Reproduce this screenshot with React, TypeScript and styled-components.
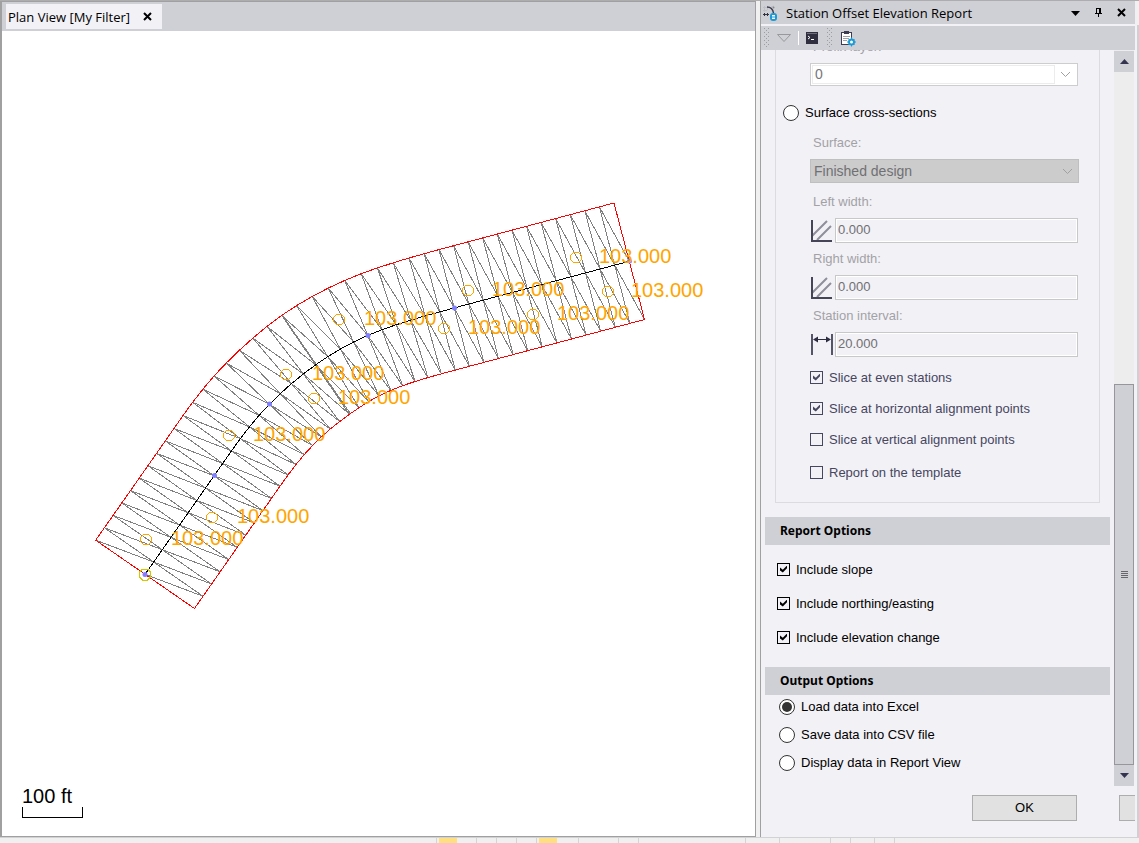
import React from "react";
import styled, { createGlobalStyle, css } from "styled-components";

const sans = `"Liberation Sans", Arial, sans-serif`;
const ui = `"Open Sans", "Noto Sans", sans-serif`;
const c = {
  bar: "#cfd0d5",
  pane: "#f2f1f6",
  edge: "#a0a0a0",
  line: "#cdcdcd",
  mute: "#a2a2a6",
  ink: "#343450",
};

const GlobalStyle = createGlobalStyle`
  * { box-sizing: border-box; }
  body { margin: 0; background: #f0f0f0; overflow: hidden; font: 13px/16px ${sans}; color: #000; }
  button, input, select { font: inherit; color: inherit; margin: 0; padding: 0; border-radius: 0; }
  button { background: none; border: 0; }
`;

const Shell = styled.div`
  height: 100vh;
  display: flex;
  flex-direction: column;
  border-top: 1px solid #adadb0;
`;
const Main = styled.main`
  flex: 1;
  min-height: 0;
  display: flex;
`;

/* ---- plan view ---- */
const PlanPane = styled.section`
  flex: 1;
  min-width: 0;
  display: flex;
  flex-direction: column;
  background: #fff;
  border: 1px solid ${c.edge};
  border-left-width: 2px;
`;
const TabBar = styled.div`
  height: 29px;
  display: flex;
  padding: 2px 4px;
  background: ${c.bar};
`;
const Tab = styled.div`
  display: flex;
  align-items: center;
  justify-content: space-between;
  width: 156px;
  padding: 0 10px 0 2px;
  background: ${c.pane};
  font: 13px/20px ${ui};
  white-space: nowrap;
`;
const Canvas = styled.div`
  position: relative;
  flex: 1;
  min-height: 0;
  overflow: hidden;
`;
const Drawing = styled.svg`
  display: block;
`;
const ScaleBar = styled.div`
  position: absolute;
  left: 20px;
  bottom: 18px;
  width: 61px;
  height: 34px;
  font: 20px/24px ${sans};
  white-space: nowrap;
  &::after {
    content: "";
    position: absolute;
    left: 0;
    right: 0;
    bottom: 0;
    height: 10px;
    border: 1px solid #000;
    border-top: 0;
  }
`;

/* ---- report panel ---- */
const Panel = styled.aside`
  flex: none;
  width: 375px;
  margin-left: 4px;
  display: flex;
  flex-direction: column;
  background: ${c.pane};
  border-left: 1px solid ${c.edge};
`;
const TitleBar = styled.header`
  flex: none;
  height: 23px;
  margin-bottom: 2px;
  display: flex;
  align-items: center;
  gap: 8px;
  padding: 0 9px 0 1px;
  background: ${c.bar};
  font: 13px/20px ${ui};
`;
const Title = styled.h1`
  flex: 1;
  margin: 0;
  font: inherit;
`;
const TitleButtons = styled.div`
  display: flex;
  align-items: center;
  gap: 15px;
`;
const IconButton = styled.button`
  display: grid;
  place-items: center;
`;
const Toolbar = styled.div`
  height: 24px;
  flex: none;
  display: flex;
  align-items: center;
  padding-left: 3px;
  background: ${c.bar};
`;
const Divider = styled.span`
  width: 1px;
  height: 14px;
  margin-right: 6px;
  background: #fff;
`;
const ConsoleButton = styled(IconButton)`
  margin-right: 8px;
`;
const Scroller = styled.div`
  flex: 1;
  min-height: 0;
  display: flex;
  overflow: hidden;
`;
const Content = styled.form`
  flex: 1;
  min-width: 0;
  padding: 0 4px;
`;
const Group = styled.div`
  height: 464px;
  margin: 0 10px 14px;
  padding: 0 20px 0 34px;
  border: 1px solid #dbdbe0;
  border-top: 0;
`;
const Field = styled.div<{ $after?: number }>`
  display: flex;
  flex-direction: column;
  gap: 8px;
  margin-bottom: ${(p) => p.$after ?? 8}px;
`;
const ClippedField = styled(Field)`
  margin-top: -11px;
`;
const FieldLabel = styled.label`
  height: 16px;
  padding-left: 3px;
  color: ${c.mute};
`;
const Combo = styled.div`
  height: 23px;
  display: flex;
  align-items: stretch;
  padding: 1px;
  margin-right: 1px;
  background: #fff;
  border: 1px solid ${c.line};
`;
const ComboInput = styled.input`
  flex: 1;
  min-width: 0;
  padding: 0 0 2px 2px;
  border: 1px solid #ececec;
  background: #fff;
  font-size: 14px;
  color: #77777a;
`;
const ComboButton = styled(IconButton)`
  width: 21px;
`;
const SelectBox = styled.div`
  height: 24px;
  display: grid;
  align-items: center;
  background: #cccccc;
  border: 1px solid #bfbfbf;
  & > * { grid-area: 1 / 1; }
  & > svg { justify-self: end; margin-right: 5px; }
`;
const Select = styled.select`
  appearance: none;
  width: 100%;
  height: 22px;
  padding-left: 3px;
  border: 0;
  background: transparent;
  font-size: 14px;
  color: #707073;
  opacity: 1;
`;
const Measure = styled.div`
  display: flex;
  align-items: center;
  gap: 2px;
  margin-right: 1px;
`;
const MeasureInput = styled.input`
  flex: 1;
  min-width: 0;
  height: 25px;
  padding: 0 2px 3px;
  border: 1px solid #c8c8c8;
  box-shadow: inset 0 0 0 1px #fff;
  background: ${c.pane};
  color: #6f6f73;
`;
const Choices = styled.div<{ $gap: number; $pad?: string }>`
  display: flex;
  flex-direction: column;
  align-items: flex-start;
  gap: ${(p) => p.$gap}px;
  padding: ${(p) => p.$pad ?? "0"};
`;
const Choice = styled.label<{ $dim?: boolean }>`
  display: flex;
  align-items: center;
  gap: 6px;
  height: 20px;
  color: ${(p) => (p.$dim ? "#46465f" : "#000")};
`;
const control = css`
  appearance: none;
  flex: none;
  display: grid;
  place-items: center;
`;
const Check = styled.input.attrs({ type: "checkbox" })`
  ${control}
  width: 13px;
  height: 13px;
  margin-bottom: 2px;
  border: 1px solid currentColor;
  &:checked::after {
    content: "";
    width: 7px;
    height: 7px;
    background: currentColor;
    clip-path: polygon(0 30%, 40% 60%, 100% 0, 100% 40%, 40% 100%, 0 70%);
  }
`;
const Radio = styled.input.attrs({ type: "radio" })`
  ${control}
  width: 16px;
  height: 16px;
  border: 1px solid #333;
  border-radius: 50%;
  background: #fff;
  &:checked::after {
    content: "";
    width: 10px;
    height: 10px;
    border-radius: 50%;
    background: #333;
  }
`;
const ModeChoice = styled(Choice)`
  height: 20px;
  margin: 17px 0 12px -27px;
`;
const SectionTitle = styled.h2`
  height: 28px;
  margin: 0;
  padding-left: 15px;
  background: ${c.bar};
  font: bold 12px/28px "Noto Sans", "Open Sans", sans-serif;
`;
const Scrollbar = styled.div`
  flex: none;
  width: 20px;
  margin-right: 1px;
  display: flex;
  flex-direction: column;
  padding-top: 1px;
  background: #ededed;
`;
const ScrollButton = styled(IconButton)`
  height: 21px;
  background: ${c.bar};
`;
const Track = styled.div`
  flex: 1;
  display: flex;
  flex-direction: column;
  justify-content: flex-end;
`;
const Thumb = styled.div`
  height: 55%;
  display: grid;
  place-items: center;
  background: ${c.bar};
  border: 1px solid #97979b;
`;
const Footer = styled.footer`
  flex: none;
  height: 51px;
  display: flex;
  justify-content: flex-end;
  gap: 42px;
  padding-top: 9px;
`;
const PushButton = styled.button<{ $cut?: boolean }>`
  width: ${(p) => (p.$cut ? 16 : 105)}px;
  height: 26px;
  background: #e1e1e1;
  border: 1px solid #adadad;
  border-right-width: ${(p) => (p.$cut ? 0 : 1)}px;
`;
const RightRail = styled.div`
  flex: none;
  width: 4px;
  margin-top: 24px;
  background: ${c.bar};
  border-left: 2px solid ${c.pane};
`;

/* ---- status strip ---- */
const Status = styled.div`
  height: 6px;
  flex: none;
  display: flex;
  border-top: 1px solid #d2d2d4;
  background: #f0f0f0;
`;
const StatusCell = styled.span<{ $w: number; $on?: boolean }>`
  flex: none;
  width: ${(p) => p.$w}px;
  padding-left: 2px;
  border-right: 1px solid #d4d4d4;
  &::before {
    content: "";
    display: ${(p) => (p.$on ? "block" : "none")};
    width: 18px;
    height: 5px;
    background: #ffdf7f;
  }
`;

type P = [number, number];
/* Evenly spaced stations on a tangent, both ends included. */
const tangent = (a: P, b: P, n: number): P[] =>
  Array.from({ length: n + 1 }, (_, i) => [
    a[0] + ((b[0] - a[0]) * i) / n,
    a[1] + ((b[1] - a[1]) * i) / n,
  ]);
const outer: P[] = [
  ...tangent([95.7, 540.2], [174, 428.5], 9),
  [183, 415.5], [192.7, 402.3], [202.9, 389.2], [214, 376], [226.3, 363], [239.3, 350.3],
  [252.8, 338.2], [267, 326.4], [281.7, 315.4], [296.5, 305.6], [312.2, 296.5],
  [328.2, 288.1], [344.7, 280.5], [361.2, 273.7], [377.5, 267.9], [393.3, 262.8],
  [409, 258], [424.2, 253.7],
  ...tangent([439, 249.6], [614, 203], 12),
];
const inner: P[] = [
  ...tangent([194.5, 608.5], [280, 486.2], 10),
  [288, 475], [296, 464.5], [304.2, 454.7], [312.6, 445.5], [321.3, 437], [330.2, 429],
  [339.7, 421.5], [349.5, 414.3], [359, 407.7], [368.5, 401.7], [379, 395.9],
  [390.8, 390.4], [402.6, 385.7], [415, 381.5], [427.9, 377.6], [441.3, 373.8],
  [455.3, 370.1],
  ...tangent([469.3, 366.3], [644.5, 319.5], 12),
];
const center: P[] = outer.map(([x, y], i) => [(x + inner[i][0]) / 2, (y + inner[i][1]) / 2]);
const pts = (a: P[]) => a.map((p) => p.join(",")).join(" ");
const seg = (a: P, b: P) => `M${a.join(" ")}L${b.join(" ")}`;
const mesh = center
  .map((m, i) =>
    i === 0
      ? ""
      : (i < center.length - 1 ? seg(outer[i], inner[i]) : "") +
        seg(outer[i - 1], m) +
        seg(center[i - 1], inner[i])
  )
  .join("");
const nodes: P[] = [[145, 574.5], [214.5, 475.5], [269.5, 404], [368, 335.5], [454.5, 308], [629.5, 261]];
const shots: { at: P; label: P }[] = [
  { at: [576, 257.5], label: [599, 263] },
  { at: [608, 291.5], label: [631, 297] },
  { at: [468, 290.5], label: [492, 296] },
  { at: [533, 314.5], label: [557, 320] },
  { at: [444, 328.5], label: [468, 334] },
  { at: [339, 319.5], label: [364, 325] },
  { at: [286, 374.5], label: [312, 380] },
  { at: [314, 398.5], label: [338, 404] },
  { at: [229, 435.5], label: [253, 441] },
  { at: [212, 517.5], label: [237, 523] },
  { at: [146, 539.5], label: [171, 545] },
];

const Plan = () => (
  <Drawing width="753" height="640" viewBox="2 31 753 640" fill="none">
    <g shapeRendering="crispEdges">
      <path d={mesh} stroke="#808080" />
      <path d="M283 316L347 411M282 315L350 413" stroke="#808080" />
      <polygon points={pts([...outer, ...[...inner].reverse()])} stroke="#f00" />
      <polyline points={pts(center)} stroke="#000" />
      <path d="M142.500 569h5l3 3v5l-3 3h-5l-3-3v-5z" stroke="#d2c800" />
      {shots.map(({ at: [x, y] }) => (
        <circle key={x} cx={x} cy={y} r="5.500" stroke="#ffa500" />
      ))}
    </g>
    {nodes.map(([x, y]) => (
      <circle key={x} cx={x} cy={y} r="2.500" fill="#8080ff" />
    ))}
    <g fill="#ffa500" fontFamily={sans} fontSize="20">
      {shots.map(({ label: [x, y] }) => (
        <text key={x} x={x} y={y}>103.000</text>
      ))}
    </g>
  </Drawing>
);

const Cross = () => (
  <svg width="9" height="9" viewBox="0 0 9 9" stroke="#000" strokeWidth="2">
    <path d="M1 1l7 7M8 1L1 8" />
  </svg>
);
const Chevron = () => (
  <svg width="11" height="7" viewBox="0 0 11 7" fill="none" stroke="#a0a0a0">
    <path d="M1 1l4.500 4.500L10 1" />
  </svg>
);
const Grip = () => (
  <svg width="6" height="20" viewBox="0 0 6 20" fill="#9c9ca2" shapeRendering="crispEdges">
    {[0, 4, 8, 12, 16].map((y) => (
      <path key={y} d={`M0 ${y}h1v1h-1zM4 ${y}h1v1h-1zM2 ${y + 2}h1v1h-1z`} />
    ))}
  </svg>
);
const ReportIcon = () => (
  <svg width="16" height="16" viewBox="0 0 16 16" fill="none">
    <path d="M1 2.500h5M1 5.500h4M2.500 1v6M5.500 1v4M9 2l3-1" stroke="#c0c0c8" />
    <path d="M5 2c4 0 6 3 6.500 6" stroke="#3b3b4c" strokeWidth="1.500" />
    <path d="M1 9.500h6M2.500 8v3M5.500 8v3" stroke="#33333f" />
    <circle cx="11.500" cy="2.500" r="1" fill="#88888f" />
    <rect x="8" y="8" width="7" height="8" rx="3" fill="#1b9ad6" />
    <rect x="10" y="10" width="3" height="4" fill="#fff" />
    <path d="M10 12h3" stroke="#1b9ad6" />
  </svg>
);
const WidthIcon = () => (
  <svg width="23" height="23" viewBox="0 0 23 23" fill="none">
    <path d="M2 17L17 2M7 21L21 7" stroke="#8e8e9c" strokeWidth="2" />
    <path d="M2 1v21h20" stroke="#45455a" strokeWidth="2" />
  </svg>
);
const IntervalIcon = () => (
  <svg width="23" height="23" viewBox="0 0 23 23">
    <path d="M2 1v21M22 1v21" stroke="#55556a" strokeWidth="2" />
    <path d="M4 6.500h16" stroke="#2c2c40" strokeWidth="1" />
    <path d="M3 6.500l5-3v6zM21 6.500l-5-3v6z" fill="#2c2c40" />
  </svg>
);

const MeasureField = ({ id, label, value, icon, after }: {
  id: string; label: string; value: string; icon: React.ReactNode; after?: number;
}) => (
  <Field $after={after}>
    <FieldLabel htmlFor={id}>{label}</FieldLabel>
    <Measure>
      {icon}
      <MeasureInput id={id} defaultValue={value} disabled />
    </Measure>
  </Field>
);

const Tick = ({ label, on, dim }: { label: string; on?: boolean; dim?: boolean }) => (
  <Choice $dim={dim}>
    <Check defaultChecked={on} disabled={dim} />
    {label}
  </Choice>
);

const cells: [number, boolean?][] = [
  [437], [40, true], [20], [20], [20], [42, true], [40], [20], [107], [34], [51], [20], [24], [20],
];

export default function App() {
  return (
    <Shell>
      <GlobalStyle />
      <Main>
        <PlanPane>
          <TabBar>
            <Tab>
              Plan View [My Filter]
              <IconButton aria-label="Close tab"><Cross /></IconButton>
            </Tab>
          </TabBar>
          <Canvas>
            <Plan />
            <ScaleBar>100 ft</ScaleBar>
          </Canvas>
        </PlanPane>
        <Panel>
          <TitleBar>
            <ReportIcon />
            <Title>Station Offset Elevation Report</Title>
            <TitleButtons>
              <IconButton aria-label="Menu">
                <svg width="9" height="9" viewBox="0 0 9 9"><path d="M0 3h9L4.500 8z" /></svg>
              </IconButton>
              <IconButton aria-label="Pin">
                <svg width="7" height="9" viewBox="0 0 7 9" shapeRendering="crispEdges">
                  <path d="M1 0h5v5h1v1H4v3H3V6H0V5h1zM2 1v4h2V1z" fillRule="evenodd" />
                </svg>
              </IconButton>
              <IconButton aria-label="Close"><Cross /></IconButton>
            </TitleButtons>
          </TitleBar>
          <Toolbar>
            <Grip />
            <IconButton aria-label="Filter">
              <svg width="28" height="16" viewBox="0 0 28 16" fill="none" stroke="#98989c">
                <path d="M7.500 4.500h13l-6.500 7z" />
              </svg>
            </IconButton>
            <Divider />
            <ConsoleButton aria-label="Console">
              <svg width="14" height="14" viewBox="0 0 14 14" fill="none">
                <rect x="1" y="1" width="12" height="12" fill="#2f2f40" />
                <path d="M2 2.500h10" stroke="#6d6d7a" />
                <path d="M3 5l2 1.500L3 8M6 8.500h3" stroke="#fff" />
              </svg>
            </ConsoleButton>
            <Grip />
            <IconButton aria-label="Report settings">
              <svg width="28" height="18" viewBox="0 0 28 18" fill="none">
                <rect x="8.500" y="3.500" width="10" height="12" fill="#fff" stroke="#3c3c52" />
                <rect x="11" y="2" width="5" height="3" fill="#3c3c52" />
                <path d="M10 7.500h7M10 9.500h6M10 11.500h4" stroke="#a0a0ac" />
                <circle cx="18.500" cy="13" r="2.500" fill="#fff" stroke="#1b9ad6" strokeWidth="2" />
                <path d="M18.500 8.500v1.500M18.500 16v1.500M14 13h1.500M21.500 13H23M15.500 10l1 1M21.500 10l-1 1M15.500 16l1-1M21.500 16l-1-1" stroke="#1b9ad6" />
              </svg>
            </IconButton>
          </Toolbar>
          <Scroller>
            <Content>
              <Group>
                <ClippedField>
                  <FieldLabel htmlFor="prefix">Prefix layer:</FieldLabel>
                  <Combo>
                    <ComboInput id="prefix" defaultValue="0" disabled />
                    <ComboButton type="button" aria-label="Open list"><Chevron /></ComboButton>
                  </Combo>
                </ClippedField>
                <ModeChoice>
                  <Radio name="mode" />
                  Surface cross-sections
                </ModeChoice>
                <Field $after={11}>
                  <FieldLabel htmlFor="surface">Surface:</FieldLabel>
                  <SelectBox>
                    <Select id="surface" disabled><option>Finished design</option></Select>
                    <Chevron />
                  </SelectBox>
                </Field>
                <MeasureField id="left" label="Left width:" value="0.000" icon={<WidthIcon />} />
                <MeasureField id="right" label="Right width:" value="0.000" icon={<WidthIcon />} />
                <MeasureField id="interval" label="Station interval:" value="20.000" icon={<IntervalIcon />} after={11} />
                <Choices $gap={11}>
                  <Tick dim on label="Slice at even stations" />
                  <Tick dim on label="Slice at horizontal alignment points" />
                  <Tick dim label="Slice at vertical alignment points" />
                </Choices>
                <Choices $gap={11} $pad="13px 0 0">
                  <Tick dim label="Report on the template" />
                </Choices>
              </Group>
              <SectionTitle>Report Options</SectionTitle>
              <Choices $gap={14} $pad="15px 12px 19px">
                <Tick on label="Include slope" />
                <Tick on label="Include northing/easting" />
                <Tick on label="Include elevation change" />
              </Choices>
              <SectionTitle>Output Options</SectionTitle>
              <Choices $gap={8} $pad="2px 14px">
                <Choice><Radio name="out" defaultChecked />Load data into Excel</Choice>
                <Choice><Radio name="out" />Save data into CSV file</Choice>
                <Choice><Radio name="out" />Display data in Report View</Choice>
              </Choices>
            </Content>
            <Scrollbar>
              <ScrollButton aria-label="Scroll up">
                <svg width="9" height="5" viewBox="0 0 9 5"><path d="M0 5h9L4.500 0z" fill={c.ink} /></svg>
              </ScrollButton>
              <Track>
                <Thumb>
                  <svg width="7" height="9" viewBox="0 0 7 9" stroke="#66666c" shapeRendering="crispEdges">
                    <path d="M0 1h7M0 3h7M0 5h7M0 7h7" />
                  </svg>
                </Thumb>
              </Track>
              <ScrollButton aria-label="Scroll down">
                <svg width="9" height="5" viewBox="0 0 9 5"><path d="M0 0h9L4.500 5z" fill={c.ink} /></svg>
              </ScrollButton>
            </Scrollbar>
          </Scroller>
          <Footer>
            <PushButton>OK</PushButton>
            <PushButton $cut aria-label="Cancel" />
          </Footer>
        </Panel>
        <RightRail />
      </Main>
      <Status>
        {cells.map(([w, on], i) => <StatusCell key={i} $w={w} $on={on} />)}
      </Status>
    </Shell>
  );
}
